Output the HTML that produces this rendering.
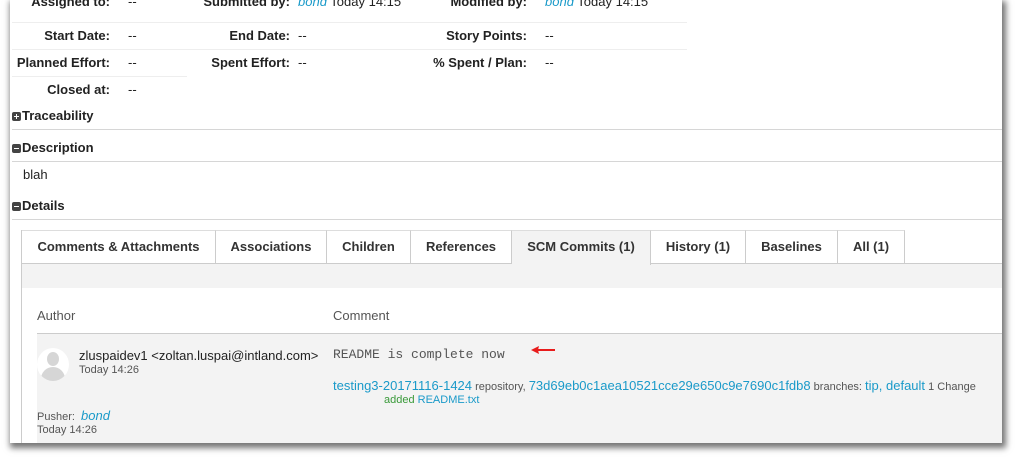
<!DOCTYPE html>
<html><head><meta charset="utf-8"><style>
body{margin:0;width:1018px;height:459px;background:#fff;overflow:hidden;font-family:"Liberation Sans",sans-serif;position:relative}
#win{position:absolute;left:10px;top:0;width:992px;height:443px;background:#fff;overflow:hidden;box-shadow:2px 3px 6px 2px rgba(0,0,0,.55)}
#in{position:absolute;left:0;top:0;width:992px;height:443px}
.a{position:absolute;white-space:nowrap}
.lb{font-weight:bold;font-size:13px;color:#222;text-align:right}
.v{font-size:13px;color:#222}
.l{color:#1a9ac9}
.hr{position:absolute;height:1px;background:#d6d6d6}
.sec{font-weight:bold;font-size:13px;color:#222}
.ic{display:inline-block;width:9px;height:9px;background:#444;border-radius:2px;vertical-align:-1px;margin-right:1px;position:relative}
.ic:before{content:"";position:absolute;left:2px;top:4px;width:5px;height:1px;background:#fff}
.ic.p:after{content:"";position:absolute;left:4px;top:2px;width:1px;height:5px;background:#fff}
.tab{position:absolute;top:230px;height:33px;border-right:1px solid #ccc;border-top:1px solid #ddd;font-weight:bold;font-size:13px;color:#333;line-height:31px;text-align:center}
</style></head><body>
<div id="win"><div id="in">
<div class="a lb" style="left:0;width:100px;top:-6px">Assigned to:</div><div class="a v" style="left:118px;top:-6px">--</div>
<div class="a lb" style="left:150px;width:130px;top:-6px">Submitted by:</div><div class="a v" style="left:288px;top:-6px"><i class="l">bond</i> Today 14:15</div>
<div class="a lb" style="left:380px;width:137px;top:-6px">Modified by:</div><div class="a v" style="left:535px;top:-6px"><i class="l">bond</i> Today 14:15</div>
<div class="hr" style="left:2px;top:22px;width:675px;background:#eee"></div>
<div class="a lb" style="left:0;width:100px;top:28px">Start Date:</div><div class="a v" style="left:118px;top:28px">--</div>
<div class="a lb" style="left:150px;width:130px;top:28px">End Date:</div><div class="a v" style="left:288px;top:28px">--</div>
<div class="a lb" style="left:380px;width:137px;top:28px">Story Points:</div><div class="a v" style="left:535px;top:28px">--</div>
<div class="hr" style="left:2px;top:49px;width:675px;background:#eee"></div>
<div class="a lb" style="left:0;width:100px;top:55px">Planned Effort:</div><div class="a v" style="left:118px;top:55px">--</div>
<div class="a lb" style="left:150px;width:130px;top:55px">Spent Effort:</div><div class="a v" style="left:288px;top:55px">--</div>
<div class="a lb" style="left:380px;width:137px;top:55px">% Spent / Plan:</div><div class="a v" style="left:535px;top:55px">--</div>
<div class="hr" style="left:2px;top:76px;width:175px;background:#eee"></div>
<div class="a lb" style="left:0;width:100px;top:82px">Closed at:</div><div class="a v" style="left:118px;top:82px">--</div>
<div class="a sec" style="left:2px;top:108px"><span class="ic p"></span>Traceability</div>
<div class="hr" style="left:2px;top:129px;width:990px"></div>
<div class="a sec" style="left:2px;top:140px"><span class="ic"></span>Description</div>
<div class="hr" style="left:2px;top:161px;width:990px"></div>
<div class="a v" style="left:13px;top:167px">blah</div>
<div class="a sec" style="left:2px;top:198px"><span class="ic"></span>Details</div>
<div class="hr" style="left:2px;top:219px;width:990px"></div>
<div class="a" style="left:11px;top:230px;width:990px;height:220px;border-left:1px solid #ccc"></div>
<div class="a" style="left:12px;top:263px;width:990px;height:1px;background:#ccc"></div>
<div class="a" style="left:12px;top:264px;width:990px;height:24px;background:#f3f3f3"></div>
<div class="tab" style="left:12px;width:193px">Comments &amp; Attachments</div>
<div class="tab" style="left:206px;width:110px">Associations</div>
<div class="tab" style="left:317px;width:83px">Children</div>
<div class="tab" style="left:401px;width:100px">References</div>
<div class="tab" style="left:502px;width:138px;background:#f3f3f3;height:34px">SCM Commits (1)</div>
<div class="tab" style="left:641px;width:94px">History (1)</div>
<div class="tab" style="left:736px;width:91px">Baselines</div>
<div class="tab" style="left:828px;width:66px">All (1)</div>
<div class="a v" style="left:27px;top:308px;color:#555">Author</div>
<div class="a v" style="left:323px;top:308px;color:#555">Comment</div>
<div class="a" style="left:27px;top:333px;width:970px;height:1px;background:#ccc"></div>
<div class="a" style="left:27px;top:334px;width:970px;height:110px;background:#f3f3f3"></div>
<div class="a" style="left:27px;top:348px;width:32px;height:33px;border-radius:50%;background:#fff;overflow:hidden"><div style="position:absolute;left:10px;top:4px;width:12px;height:14px;border-radius:50%;background:#d6d6d6"></div><div style="position:absolute;left:4px;top:19px;width:24px;height:16px;border-radius:12px 12px 0 0;background:#d6d6d6"></div></div>
<div class="a v" style="left:69px;top:348px">zluspaidev1 &lt;zoltan.luspai@intland.com&gt;</div>
<div class="a" style="left:69px;top:364px;font-size:11px;color:#555">Today 14:26</div>
<div class="a" style="left:27px;top:408px;font-size:11px;color:#555">Pusher: &nbsp;<i class="l" style="font-size:13px">bond</i></div>
<div class="a" style="left:27px;top:424px;font-size:11px;color:#555">Today 14:26</div>
<div class="a" style="left:323px;top:347px;font-family:'Liberation Mono',monospace;font-size:13px;color:#555">README is complete now</div>
<svg class="a" style="left:520px;top:344px" width="26" height="12"><path d="M3 6H25" stroke="#e81c1c" stroke-width="2" fill="none"/><path d="M1 6L9 2L8 6L9 10Z" fill="#e81c1c"/></svg>
<div class="a" style="left:323px;top:378px;font-size:11px;color:#555"><span class="l" style="font-size:13px">testing3-20171116-1424</span> repository, <span class="l" style="font-size:13px">73d69eb0c1aea10521cce29e650c9e7690c1fdb8</span> branches: <span class="l" style="font-size:13px">tip, default</span> 1 Change</div>
<div class="a" style="left:374px;top:394px;font-size:11px;color:#3a9a3a">added <span class="l">README.txt</span></div>
</div></div>
</body></html>
